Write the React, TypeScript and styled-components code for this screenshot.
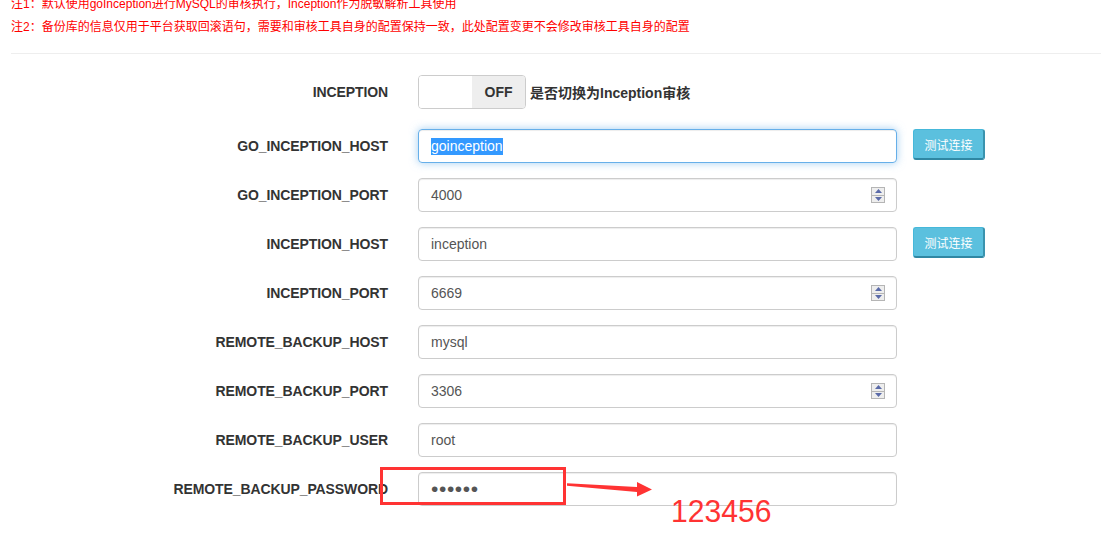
import React from 'react';
import styled, { createGlobalStyle, css } from 'styled-components';

const GlobalStyle = createGlobalStyle`
  body {
    margin: 0;
    background: #fff;
    font-family: "Liberation Sans", Arial, "Noto Sans CJK SC", sans-serif;
    color: #333;
    overflow: hidden;
  }
`;

type FieldDef = {
  label: string;
  value: string;
  spinner?: boolean;
  test?: boolean;
  focused?: boolean;
  password?: boolean;
};

const fields: FieldDef[] = [
  { label: 'GO_INCEPTION_HOST', value: 'goinception', test: true, focused: true },
  { label: 'GO_INCEPTION_PORT', value: '4000', spinner: true },
  { label: 'INCEPTION_HOST', value: 'inception', test: true },
  { label: 'INCEPTION_PORT', value: '6669', spinner: true },
  { label: 'REMOTE_BACKUP_HOST', value: 'mysql' },
  { label: 'REMOTE_BACKUP_PORT', value: '3306', spinner: true },
  { label: 'REMOTE_BACKUP_USER', value: 'root' },
  { label: 'REMOTE_BACKUP_PASSWORD', value: '••••••', password: true },
];

const App = () => {
  return (
    <Page>
      <GlobalStyle />
      <Notes>
        <Note>注1：默认使用goInception进行MySQL的审核执行，Inception作为脱敏解析工具使用</Note>
        <Note>注2：备份库的信息仅用于平台获取回滚语句，需要和审核工具自身的配置保持一致，此处配置变更不会修改审核工具自身的配置</Note>
      </Notes>
      <Divider />
      <Form>
        <Row $first>
          <Label>INCEPTION</Label>
          <Switch>
            <SwitchHandle />
            <SwitchOff>OFF</SwitchOff>
          </Switch>
          <SwitchHint>是否切换为Inception审核</SwitchHint>
        </Row>
        {fields.map((f) => (
          <Row key={f.label}>
            <Label>{f.label}</Label>
            <Field $focused={f.focused}>
              {f.focused ? (
                <Selected>{f.value}</Selected>
              ) : f.password ? (
                <Dots>{f.value}</Dots>
              ) : (
                <span>{f.value}</span>
              )}
              {f.spinner && (
                <Spinner>
                  <SpinBtn>
                    <svg width="7" height="4" viewBox="0 0 7 4">
                      <path d="M0 4 L3.5 0 L7 4 Z" fill="#5a6aa8" />
                    </svg>
                  </SpinBtn>
                  <SpinBtn>
                    <svg width="7" height="4" viewBox="0 0 7 4">
                      <path d="M0 0 L3.5 4 L7 0 Z" fill="#5a6aa8" />
                    </svg>
                  </SpinBtn>
                </Spinner>
              )}
            </Field>
            {f.test && <TestButton>测试连接</TestButton>}
          </Row>
        ))}
      </Form>
      <Mark />
      <Arrow width="100" height="30" viewBox="560 478 100 30">
        <polygon
          points="567,483.3 637,487 637,482 652,489.5 637,496.5 637,492 567,485.8"
          fill="#f33"
        />
      </Arrow>
      <Answer>123456</Answer>
    </Page>
  );
};

const Page = styled.div`
  position: relative;
  width: 1101px;
  height: 536px;
  overflow: hidden;
`;

const Notes = styled.div`
  margin-top: -7px;
  padding-left: 11px;
`;

const Note = styled.p`
  margin: 0;
  font-size: 12px;
  line-height: 23px;
  color: #f00;
  white-space: nowrap;
`;

const Divider = styled.div`
  margin: 14px 0 21px 11px;
  height: 1px;
  background: #eee;
`;

const Form = styled.div`
  display: flex;
  flex-direction: column;
  gap: 15px;
`;

const Row = styled.div<{ $first?: boolean }>`
  display: flex;
  align-items: center;
  height: 34px;
  ${({ $first }) =>
    $first &&
    css`
      margin-bottom: 5px;
    `}
`;

const Label = styled.label`
  width: 388px;
  margin-right: 30px;
  text-align: right;
  font-size: 14px;
  font-weight: bold;
  letter-spacing: -0.1px;
  color: #333;
  white-space: nowrap;
`;

const Switch = styled.div`
  display: flex;
  width: 106px;
  height: 32px;
  border: 1px solid #ccc;
  border-radius: 4px;
  overflow: hidden;
`;

const SwitchHandle = styled.span`
  width: 53px;
  background: #fff;
`;

const SwitchOff = styled.span`
  flex: 1;
  display: flex;
  align-items: center;
  justify-content: center;
  background: #eee;
  font-size: 14px;
  font-weight: bold;
  color: #333;
`;

const SwitchHint = styled.span`
  margin-left: 4px;
  font-size: 14px;
  font-weight: bold;
  color: #333;
`;

const Field = styled.div<{ $focused?: boolean }>`
  box-sizing: border-box;
  display: flex;
  align-items: center;
  justify-content: space-between;
  width: 479px;
  height: 34px;
  padding: 0 12px;
  border: 1px solid ${({ $focused }) => ($focused ? '#66afe9' : '#ccc')};
  border-radius: 4px;
  font-size: 14px;
  color: #555;
  box-shadow: ${({ $focused }) =>
    $focused
      ? 'inset 0 1px 1px rgba(0,0,0,.075), 0 0 8px rgba(102,175,233,.6)'
      : 'inset 0 1px 1px rgba(0,0,0,.075)'};
`;

const Selected = styled.span`
  background: #3399ff;
  color: #fff;
  line-height: 17px;
`;

const Dots = styled.span`
  font-size: 21px;
  line-height: 1;
  letter-spacing: 0.6px;
  color: #555;
  margin-top: -1px;
`;

const Spinner = styled.span`
  display: flex;
  flex-direction: column;
  width: 14px;
  height: 16px;
  margin-right: -1px;
`;

const SpinBtn = styled.span`
  flex: 1;
  display: flex;
  align-items: center;
  justify-content: center;
  box-sizing: border-box;
  border: 1px solid #b5b5b5;
  background: #eee;
  & + & {
    border-top: none;
  }
`;

const TestButton = styled.button`
  box-sizing: border-box;
  margin-left: 16px;
  width: 72px;
  height: 31px;
  margin-top: -3px;
  padding: 0;
  border: 1px solid #46b8da;
  border-bottom: 2px solid #2f87a3;
  border-right: 2px solid #3a93ae;
  border-radius: 3px;
  background: #5bc0de;
  color: #fff;
  font-family: "Noto Sans CJK SC", sans-serif;
  font-size: 12px;
`;

const Mark = styled.div`
  position: absolute;
  left: 380px;
  top: 467px;
  width: 180px;
  height: 32px;
  border: 3px solid #f33;
`;

const Arrow = styled.svg`
  position: absolute;
  left: 560px;
  top: 478px;
`;

const Answer = styled.div`
  position: absolute;
  left: 671px;
  top: 493px;
  font-size: 32px;
  line-height: 36px;
  color: #f33;
  transform: scaleX(0.94);
  transform-origin: left center;
`;

export default App;
